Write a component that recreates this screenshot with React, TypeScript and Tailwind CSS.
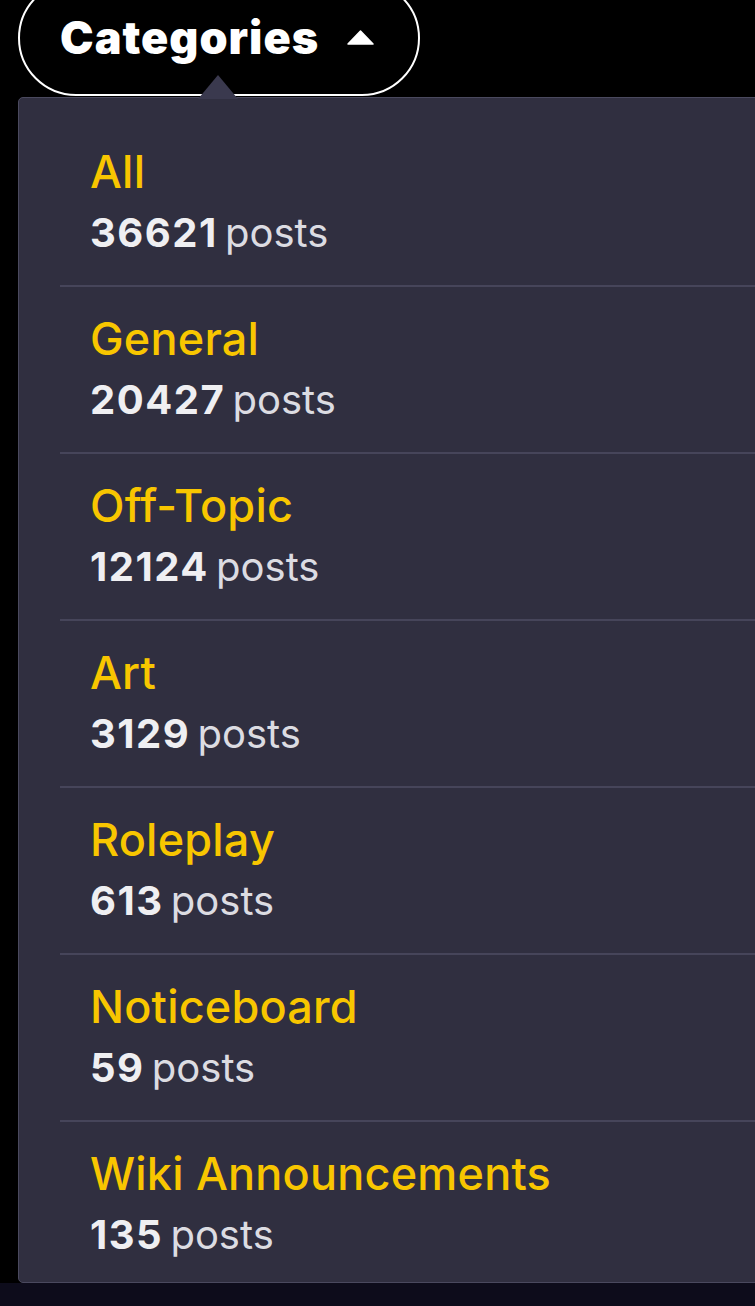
import React from "react";

interface Category {
  name: string;
  posts: number;
}

const categories: Category[] = [
  { name: "All", posts: 36621 },
  { name: "General", posts: 20427 },
  { name: "Off-Topic", posts: 12124 },
  { name: "Art", posts: 3129 },
  { name: "Roleplay", posts: 613 },
  { name: "Noticeboard", posts: 59 },
  { name: "Wiki Announcements", posts: 135 },
];

export default function App() {
  return (
    <div
      className="w-[755px] h-[1306px] overflow-hidden bg-black flex flex-col"
      style={{ fontFamily: "Inter, 'Liberation Sans', sans-serif" }}
    >
      {/* Toggle pill */}
      <button className="-mt-[20px] ml-[18px] w-[402px] h-[116px] shrink-0 rounded-full border-2 border-white flex items-center pl-[40px] gap-[28px] text-white">
        <span className="text-[45px] font-black leading-none -mt-[2px] tracking-[1px]">Categories</span>
        <svg width="27" height="15" viewBox="0 0 27 15" className="-mt-[1px]">
          <path d="M13.5 1 L26 14 L1 14 Z" fill="#fff" stroke="#fff" strokeWidth="1.5" strokeLinejoin="round" />
        </svg>
      </button>

      {/* Dropdown panel */}
      <div className="relative ml-[18px] mt-[1px] w-[760px] h-[1186px] shrink-0 rounded-[5px] border border-[#4a495e] bg-[#302f40] pt-[22px]">
        <svg width="42" height="24" viewBox="0 0 42 24" className="absolute -top-[23px] left-[178px]">
          <path d="M21 0 L41 24 L1 24 Z" fill="#3a394e" />
        </svg>
        <ul className="ml-[41px]">
          {categories.map((c, i) => (
            <li
              key={c.name}
              className={
                "pl-[30px] pt-[25px] pb-[28px] " +
                (i < categories.length - 1 ? "border-b-2 border-[#46455a]" : "")
              }
            >
              <div className="text-[45px] leading-[54px] text-[#f8c600] font-medium tracking-[0.2px]">
                {c.name}
              </div>
              <div className="mt-[10px] text-[40px] leading-[48px] text-[#dcdce2]">
                <span className="font-bold text-[#efeff2] tracking-[1.5px]">{c.posts}</span>{" "}
                <span className="-ml-[4px]">posts</span>
              </div>
            </li>
          ))}
        </ul>
      </div>
      <div className="flex-1 bg-[#0d0c1b]" />
    </div>
  );
}
